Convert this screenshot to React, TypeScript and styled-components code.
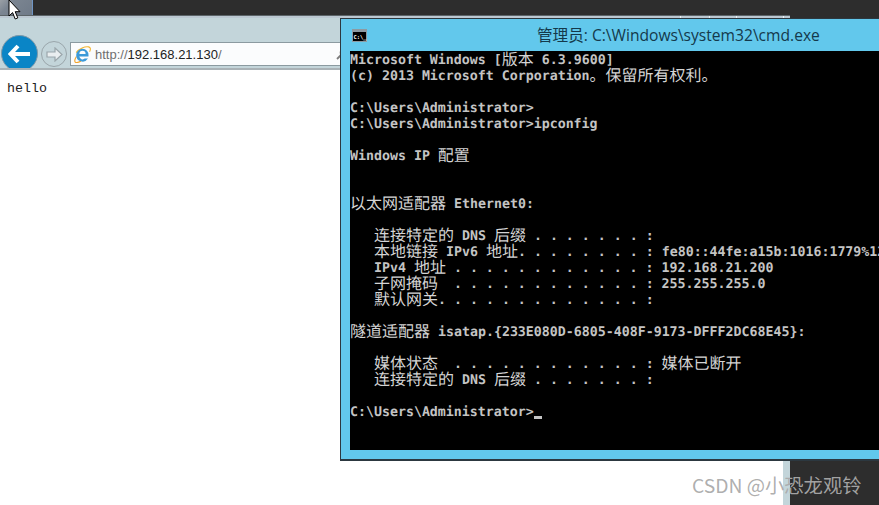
import React from "react";
import styled, { createGlobalStyle } from "styled-components";

const Global = createGlobalStyle`
  html, body { margin: 0; padding: 0; background: #2d2d2d; }
  #root { width: 879px; height: 505px; }
`;

const Desktop = styled.div`
  position: relative;
  width: 879px;
  height: 505px;
  overflow: hidden;
  background: #2d2d2d;
  display: flex;
  flex-direction: column;
`;

const TopBar = styled.div`
  height: 15px;
  flex: none;
  display: flex;
`;

const TaskTile = styled.div`
  width: 32px;
  background: linear-gradient(135deg, #9aa0a6 0%, #7b8591 30%, #6f7a88 100%);
  border-right: 1px solid #6f95c4;
`;

const MouseArrow = styled.svg`
  position: absolute;
  left: 8px;
  top: 0;
  width: 13px;
  height: 21px;
  z-index: 5;
`;

const Browser = styled.div`
  width: 783px;
  flex: 1;
  min-height: 0;
  padding-right: 7px;
  background: #c3d5da;
  border-top: 1px solid #5c6468;
  display: flex;
  flex-direction: column;
`;

const TabStrip = styled.div`
  height: 2px;
  flex: none;
  margin-right: -7px;
  display: flex;
  justify-content: flex-end;
  background: #bcc8d2;
`;

const TabTick = styled.i<{ $w: number }>`
  display: block;
  width: ${(p) => p.$w}px;
  border-left: 1px solid #eef2f5;
`;

const Toolbar = styled.div`
  height: 52px;
  flex: none;
  margin-right: -7px;
  padding: 17px 0 0 1px;
  box-sizing: border-box;
  display: flex;
  align-items: flex-start;
  overflow: hidden;
  border-bottom: 2px solid #a9b2b6;
`;

const BackButton = styled.div`
  width: 37px;
  height: 37px;
  flex: none;
  box-sizing: border-box;
  border-radius: 50%;
  background: #0a85c6;
  border: 1px solid #7d98a8;
  display: flex;
  align-items: center;
  justify-content: center;
`;

const ForwardButton = styled.div`
  width: 26px;
  height: 26px;
  flex: none;
  margin: 6px 3px 0 3px;
  box-sizing: border-box;
  border-radius: 50%;
  border: 1px solid #9aa6ab;
  display: flex;
  align-items: center;
  justify-content: center;
`;

const AddressBar = styled.div`
  flex: 1;
  height: 24px;
  margin-top: 7px;
  box-sizing: border-box;
  background: #fbfcfd;
  border: 1px solid #8b9aa0;
  display: flex;
  align-items: center;
  padding-left: 3px;
`;

const Url = styled.div`
  width: 241px;
  flex: none;
  margin-left: 4px;
  padding-top: 2px;
  font: 13px/20px "Liberation Sans", Arial, sans-serif;
  color: #6f6f6f;
  white-space: pre;
`;

const Host = styled.span`
  color: #222;
`;

const Page = styled.div`
  flex: 1;
  background: #fff;
  padding: 11px 7px;
  font: 13.33px/16px "Liberation Mono", monospace;
  color: #222;
`;

const CmdWindow = styled.div`
  position: absolute;
  left: 340px;
  top: 18px;
  width: 570px;
  height: 443px;
  box-sizing: border-box;
  background: #62c8ec;
  border: 1px solid #2c3840;
  border-bottom-width: 2px;
  padding: 0 9px 9px 9px;
  display: flex;
  flex-direction: column;
`;

const TitleBar = styled.div`
  height: 32px;
  flex: none;
  display: flex;
  align-items: center;
  padding-left: 2px;
`;

const Title = styled.div`
  margin-left: 170px;
  font: 15.6px/20px "Open Sans", "Noto Sans CJK SC", sans-serif;
  color: #14394b;
  white-space: pre;
`;

const Console = styled.div`
  flex: 1;
  padding-top: 2px;
  background: #000;
  color: #c4c4c4;
  overflow: hidden;
  font: bold 13.28px/16px "DejaVu Sans Mono", monospace;
  text-rendering: geometricPrecision;
`;

const Row = styled.div`
  height: 16px;
  white-space: pre;
`;

const Cjk = styled.span`
  font: 400 16px/0 "Noto Sans CJK SC", sans-serif;
  color: #d4d4d4;
  vertical-align: -1px;
`;

const Caret = styled.i`
  display: inline-block;
  width: 8px;
  height: 3px;
  background: #c4c4c4;
  vertical-align: -3px;
`;

const Watermark = styled.div`
  position: absolute;
  left: 692px;
  top: 472px;
  font: 19.3px/26px "Noto Sans CJK SC", "Noto Sans", sans-serif;
  color: rgba(170, 170, 170, 0.95);
  white-space: pre;
  z-index: 6;
`;

const lines = [
  "Microsoft Windows [版本 6.3.9600]",
  "(c) 2013 Microsoft Corporation。保留所有权利。",
  "",
  "C:\\Users\\Administrator>",
  "C:\\Users\\Administrator>ipconfig",
  "",
  "Windows IP 配置",
  "",
  "",
  "以太网适配器 Ethernet0:",
  "",
  "   连接特定的 DNS 后缀 . . . . . . . :",
  "   本地链接 IPv6 地址. . . . . . . . : fe80::44fe:a15b:1016:1779%12",
  "   IPv4 地址 . . . . . . . . . . . . : 192.168.21.200",
  "   子网掩码  . . . . . . . . . . . . : 255.255.255.0",
  "   默认网关. . . . . . . . . . . . . :",
  "",
  "隧道适配器 isatap.{233E080D-6805-408F-9173-DFFF2DC68E45}:",
  "",
  "   媒体状态  . . . . . . . . . . . . : 媒体已断开",
  "   连接特定的 DNS 后缀 . . . . . . . :",
  "",
];

const renderLine = (text: string) =>
  text
    .split(/([\u3000-\u9fff]+)/)
    .map((part, i) => (i % 2 ? <Cjk key={i}>{part}</Cjk> : part));

const IeIcon = () => (
  <svg width="17" height="17" viewBox="0 0 17 17" fill="none">
    <path d="M2.2 6.6C5 2.6 11 .2 14.6 .9c2.2.5 2.2 2.6 1 4.8" stroke="#f2b632" strokeWidth="1.1" />
    <path d="M2.4 10.5C.6 13.6.2 15.8 1.7 16.4c1.5.5 3.8-.4 5.4-1.4" stroke="#f2a52e" strokeWidth="1.1" />
    <path
      d="M8.6 2.8a6.4 6.4 0 0 0-6.4 6.4 6.4 6.4 0 0 0 11.8 3.4h-3.2a3.4 3.4 0 0 1-5.5-2h9.1c.1-.5.1-1 .1-1.4a6 6 0 0 0-5.9-6.4zM5.4 7.9a3.1 3.1 0 0 1 6.2 0z"
      fill="#3c9ad8"
    />
  </svg>
);

const CmdIcon = () => (
  <svg width="15" height="13" viewBox="0 0 15 13">
    <rect x="0" y="0" width="15" height="13" fill="#8d9aa1" />
    <rect x="1" y="3" width="13" height="9" fill="#000" />
    <text x="1.5" y="10" fontFamily="DejaVu Sans Mono" fontWeight="700" fontSize="5.4" fill="#fff">
      C:\_
    </text>
  </svg>
);

export default function App() {
  return (
    <Desktop>
      <Global />
      <TopBar>
        <TaskTile />
      </TopBar>
      <MouseArrow viewBox="0 0 13 21">
        <path
          d="M1 0v16l3.6-3.4 2.6 6.4 2.6-1.1-2.6-6.2H12z"
          fill="#fff"
          stroke="#000"
          strokeWidth="1"
          strokeLinejoin="miter"
        />
      </MouseArrow>
      <Browser>
        <TabStrip>
          <TabTick $w={28} />
          <TabTick $w={26} />
          <TabTick $w={46} />
          <TabTick $w={6} />
        </TabStrip>
        <Toolbar>
          <BackButton>
            <svg width="23" height="20" viewBox="0 0 23 20" fill="none">
              <path d="M10 2 2.5 10l7.5 8M3 10h19" stroke="#fff" strokeWidth="4" strokeLinejoin="miter" />
            </svg>
          </BackButton>
          <ForwardButton>
            <svg width="17" height="15" viewBox="0 0 17 15">
              <path d="M9 1l7 6.5L9 14v-4H1V5h8z" fill="#e9eef0" stroke="#9aa6ab" strokeWidth="1.2" />
            </svg>
          </ForwardButton>
          <AddressBar>
            <IeIcon />
            <Url>
              http://<Host>192.168.21.130</Host>/
            </Url>
            <svg width="12" height="12" viewBox="0 0 12 12" fill="none">
              <circle cx="7.5" cy="4.5" r="3.2" stroke="#7c7c7c" strokeWidth="1.2" />
              <path d="M5 7 1 11" stroke="#7c7c7c" strokeWidth="1.8" />
            </svg>
          </AddressBar>
        </Toolbar>
        <Page>hello</Page>
      </Browser>
      <CmdWindow>
        <TitleBar>
          <CmdIcon />
          <Title>管理员: C:\Windows\system32\cmd.exe</Title>
        </TitleBar>
        <Console>
          {lines.map((l, i) => (
            <Row key={i}>{renderLine(l)}</Row>
          ))}
          <Row>
            C:\Users\Administrator&gt;
            <Caret />
          </Row>
        </Console>
      </CmdWindow>
      <Watermark>CSDN @小恐龙观铃</Watermark>
    </Desktop>
  );
}
